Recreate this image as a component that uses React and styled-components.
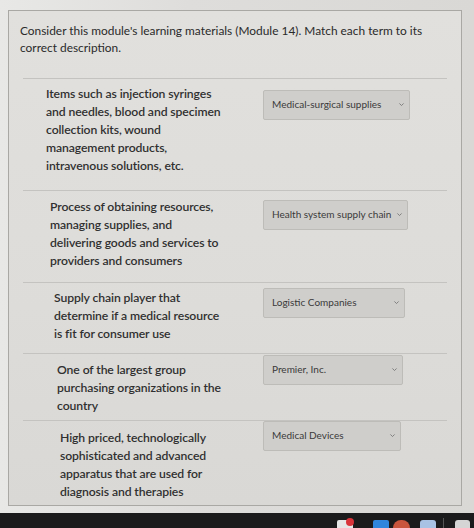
import React from "react";
import styled, { createGlobalStyle } from "styled-components";

const Global = createGlobalStyle`
  html, body { margin: 0; padding: 0; }
  body {
    width: 474px;
    height: 528px;
    overflow: hidden;
    background: #e4e4e2;
    font-family: Lato, "Open Sans", sans-serif;
    color: #2f2f2f;
  }
`;

const Screen = styled.div`
  width: 474px;
  height: 528px;
  display: flex;
  flex-direction: column;
  background: linear-gradient(90deg, #e8e8e6 0%, #dedddb 40%, #d9d8d5 100%);
`;

const Stage = styled.div`
  flex: 1;
  display: flex;
  padding: 10px 12px 7px 8px;
  min-height: 0;
`;

const Card = styled.section`
  flex: 1;
  border: 1px solid #a9a8a4;
  background: linear-gradient(180deg, #e1e0dd 0%, #dddcd9 60%, #d9d8d5 100%);
  display: flex;
  flex-direction: column;
`;

const Prompt = styled.p`
  margin: 0;
  padding: 11px 30px 0 11px;
  font-size: 11.9px;
  line-height: 17px;
  font-weight: 400;
  color: #2a2a2a;
`;

const List = styled.div`
  margin: 22px 14px 0 14px;
  display: flex;
  flex-direction: column;
`;

const Row = styled.div`
  display: grid;
  grid-template-columns: 240px 1fr;
  border-top: 1px solid #c4c3c0;
  padding: ${(p) => p.$pad}px 0 ${(p) => p.$padB}px 0;
`;

const Term = styled.div`
  padding-left: ${(p) => p.$indent}px;
  font-size: 12.2px;
  line-height: 18px;
  font-weight: 600;
  color: #303030;
  white-space: pre-line;
  letter-spacing: -0.1px;
`;

const Select = styled.div`
  width: ${(p) => p.$w}px;
  height: 30px;
  box-sizing: border-box;
  margin-top: ${(p) => p.$top}px;
  background: #cfcecb;
  border: 1px solid #bdbcb8;
  border-radius: 2px;
  display: flex;
  align-items: center;
  justify-content: space-between;
  padding: 0 4px 2px 8px;
  font-size: 10px;
  color: #3a3a3a;
`;

const Chevron = styled.svg`
  width: 7px;
  height: 7px;
  flex: none;
`;

const Dock = styled.div`
  height: 15px;
  background: #1b1b1c;
  display: flex;
  align-items: flex-end;
  overflow: hidden;
  padding-left: 337px;
`;

const DockIcon = styled.span`
  width: ${(p) => p.$w}px;
  height: 8px;
  flex: none;
  border-radius: ${(p) => p.$r}px ${(p) => p.$r}px 0 0;
  background: ${(p) => p.$c};
  margin-right: ${(p) => p.$gap}px;
  position: relative;
`;

const Badge = styled.span`
  position: absolute;
  right: -1px;
  top: -2px;
  width: 8px;
  height: 8px;
  border-radius: 50%;
  background: #d9343a;
`;

const Divider = styled.span`
  width: 1px;
  height: 10px;
  background: #555;
  margin-right: 11px;
  flex: none;
`;

const items = [
  {
    text: "Items such as injection syringes\nand needles, blood and specimen\ncollection kits, wound\nmanagement products,\nintravenous solutions, etc.",
    answer: "Medical-surgical supplies",
    indent: 23, pad: 6, padB: 15, top: 5, w: 147,
  },
  {
    text: "Process of obtaining resources,\nmanaging supplies, and\ndelivering goods and services to\nproviders and consumers",
    answer: "Health system supply chain",
    indent: 27, pad: 7, padB: 12, top: 2, w: 145,
  },
  {
    text: "Supply chain player that\ndetermine if a medical resource\nis fit for consumer use",
    answer: "Logistic Companies",
    indent: 31, pad: 6, padB: 10, top: -1, w: 142,
  },
  {
    text: "One of the largest group\npurchasing organizations in the\ncountry",
    answer: "Premier, Inc.",
    indent: 34, pad: 7, padB: 5, top: -6, w: 140,
  },
  {
    text: "High priced, technologically\nsophisticated and advanced\napparatus that are used for\ndiagnosis and therapies",
    answer: "Medical Devices",
    indent: 37, pad: 8, padB: 4, top: -8, w: 138,
  },
];

export default function App() {
  return (
    <>
      <Global />
      <Screen>
        <Stage>
          <Card>
            <Prompt>
              Consider this module's learning materials (Module 14). Match each term to its correct description.
            </Prompt>
            <List>
              {items.map((it) => (
                <Row key={it.answer} $pad={it.pad} $padB={it.padB}>
                  <Term $indent={it.indent}>{it.text}</Term>
                  <Select $top={it.top} $w={it.w}>
                    <span>{it.answer}</span>
                    <Chevron viewBox="0 0 10 10">
                      <path d="M2 3.5 L5 6.5 L8 3.5" fill="none" stroke="#777" strokeWidth="1.3" />
                    </Chevron>
                  </Select>
                </Row>
              ))}
            </List>
          </Card>
        </Stage>
        <Dock>
          <DockIcon $w={16} $r={2} $c="#e6e6e6" $gap={20}>
            <Badge />
          </DockIcon>
          <DockIcon $w={16} $r={2} $c="#2f86dd" $gap={4} />
          <DockIcon $w={17} $r={8} $c="#c9553d" $gap={10} />
          <DockIcon $w={16} $r={3} $c="#a9c2e4" $gap={7} />
          <Divider />
          <DockIcon $w={15} $r={3} $c="#d5d5d5" $gap={0} />
        </Dock>
      </Screen>
    </>
  );
}
